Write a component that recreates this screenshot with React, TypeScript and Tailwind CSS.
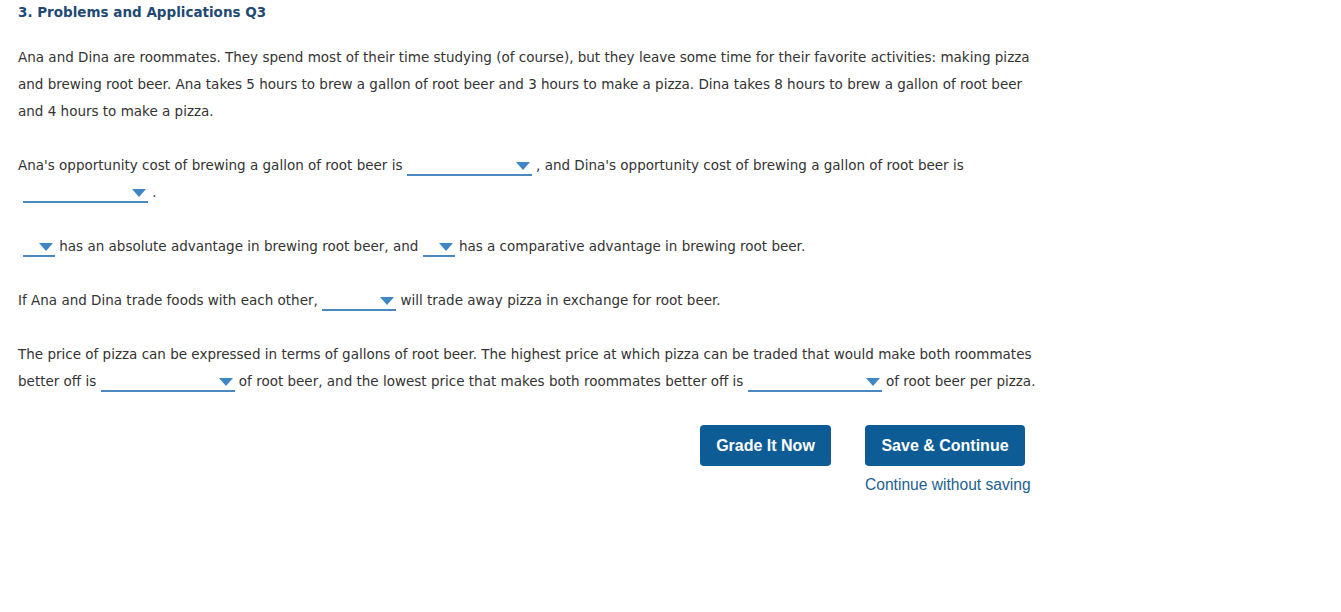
import React from "react";

function Drop({ w }: { w: number }) {
  return (
    <span
      className="inline-block overflow-hidden align-[-6px] border-b-2 border-[#4a88bf] h-[19px]"
      style={{ width: w }}
    >
      <span className="flex justify-end pt-[5px] pr-[2px]">
        <svg width="14" height="8" viewBox="0 0 14 8">
          <polygon points="0,0 14,0 7,8" fill="#3f86c4" />
        </svg>
      </span>
    </span>
  );
}

export default function App() {
  return (
    <div className="w-[1341px] h-[612px] bg-white px-[18px] pt-[2px] font-['DejaVu_Sans',sans-serif] text-[13.5px] leading-[27px] text-[#333]">
      <h1 className="font-bold text-[13.5px] text-[#1f4a73] leading-[20px]">3. Problems and Applications Q3</h1>
      <div className="mt-[22px] w-[1060px]">
        <p>
          Ana and Dina are roommates. They spend most of their time studying (of course), but they leave some time for their favorite activities: making pizza
          <br />
          and brewing root beer. Ana takes 5 hours to brew a gallon of root beer and 3 hours to make a pizza. Dina takes 8 hours to brew a gallon of root beer
          <br />
          and 4 hours to make a pizza.
        </p>
        <p className="mt-[27px]">
          Ana's opportunity cost of brewing a gallon of root beer is <Drop w={125} /> , and Dina's opportunity cost of brewing a gallon of root beer is
          <br />
          <span className="ml-[5px]"></span>
          <Drop w={125} /> .
        </p>
        <p className="mt-[27px]">
          <span className="ml-[5px]"></span>
          <Drop w={32} /> has an absolute advantage in brewing root beer, and <Drop w={32} /> has a comparative advantage in brewing root beer.
        </p>
        <p className="mt-[27px]">
          If Ana and Dina trade foods with each other, <Drop w={74} /> will trade away pizza in exchange for root beer.
        </p>
        <p className="mt-[27px]">
          The price of pizza can be expressed in terms of gallons of root beer. The highest price at which pizza can be traded that would make both roommates
          <br />
          better off is <Drop w={134} /> of root beer, and the lowest price that makes both roommates better off is <Drop w={134} /> of root beer per pizza.
        </p>
      </div>
      <div className="w-[1007px] flex justify-end gap-[34px] mt-[30px] font-['Liberation_Sans',sans-serif]">
        <button className="h-[41px] w-[131px] rounded-[4px] bg-[#0e5c96] text-white font-bold text-[16px]">
          Grade It Now
        </button>
        <div className="flex flex-col items-start w-[160px]">
          <button className="h-[41px] w-[160px] rounded-[4px] bg-[#0e5c96] text-white font-bold text-[16px]">
            Save &amp; Continue
          </button>
          <span className="mt-[9px] whitespace-nowrap text-[15.6px] leading-[20px] text-[#1d5f90]">Continue without saving</span>
        </div>
      </div>
    </div>
  );
}
